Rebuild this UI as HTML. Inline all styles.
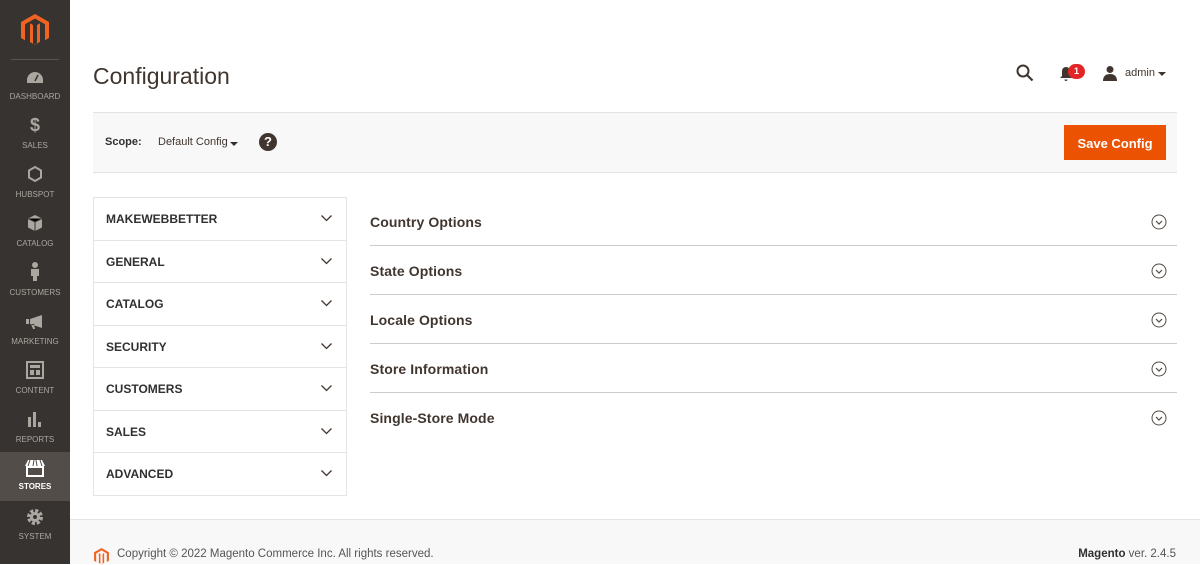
<!DOCTYPE html>
<html><head><meta charset="utf-8"><style>
*{margin:0;padding:0;box-sizing:border-box}
body{width:1200px;height:564px;overflow:hidden;font-family:"Liberation Sans",sans-serif;background:#fff;position:relative;color:#303030}
.sb{position:absolute;left:0;top:0;width:70px;height:564px;background:#373330}
.logo{position:absolute;left:21px;top:14px}
.sep{position:absolute;left:11px;top:59px;width:48px;height:1px;background:#5a5550}
.ni{position:absolute;left:0;width:70px;height:49px;text-align:center;color:#aaa6a0;font-size:8px}
.ni svg{position:absolute;left:26px;top:8px}
.ni span{position:absolute;left:0;right:0;top:30px}
.ni.act{background:#524d49;color:#fff}
.abs{position:absolute}
h1{position:absolute;left:93px;top:63px;font-size:23px;font-weight:normal;color:#41362f}
.bar{position:absolute;left:93px;top:112px;width:1084px;height:61px;background:#f8f8f8;border-top:1px solid #e3e3e3;border-bottom:1px solid #e3e3e3}
.btn{position:absolute;left:1064px;top:125px;width:102px;height:35px;background:#eb5202;color:#fff;font-size:13px;font-weight:bold;text-align:center;line-height:35px;border:1px solid #eb5202}
.lp{position:absolute;left:93px;top:197px;width:254px;height:299px;border:1px solid #e3e3e3}
.li{height:42.57px;border-bottom:1px solid #e3e3e3;font-size:12px;font-weight:bold;padding-left:12px;line-height:42px;position:relative;color:#303030}
.li:last-child{border-bottom:none}
.li svg{position:absolute;right:14px;top:17px}
.rs{position:absolute;left:370px;width:807px;height:49px;border-bottom:1px solid #cccccc;font-size:14px;font-weight:bold;color:#41362f;letter-spacing:.1px}
.rs span{position:absolute;left:0;top:17px}
.rs svg{position:absolute;right:10px;top:17px}
.ft{position:absolute;left:70px;top:519px;width:1130px;height:45px;background:#f8f8f8;border-top:1px solid #e3e3e3;font-size:11.5px;color:#555}
</style></head><body>
<div class="sb">
<svg class="logo" width="28" height="32" viewBox="0 0 28 32"><path d="M14 0L0 8v16l4 2.3V10.3L14 4.5l10 5.8v16L28 24V8z M12 11v19l2 1.2 2-1.2V11l3-1.7v18.4L14 31 9 28V9.3z" fill="#f26322" fill-rule="evenodd"/></svg>
<div class="sep"></div>
<div class="ni" style="top:62px"><svg width="18" height="16" viewBox="0 0 18 16"><path d="M9 2a8 8 0 0 0-8 8v3h16v-3a8 8 0 0 0-8-8z" fill="#aaa6a0"/><path d="M9 11L12 5" stroke="#373330" stroke-width="1.5"/></svg><span>DASHBOARD</span></div>
<div class="ni" style="top:111px"><svg width="18" height="20" viewBox="0 0 18 20" style="top:4px"><text x="9" y="16" font-size="18" font-weight="bold" text-anchor="middle" fill="#aaa6a0" font-family="Liberation Sans">$</text></svg><span>SALES</span></div>
<div class="ni" style="top:160px"><svg width="18" height="18" viewBox="0 0 18 18" style="top:5px"><path d="M9 2l6 3.5v7L9 16l-6-3.5v-7z" fill="none" stroke="#aaa6a0" stroke-width="2"/></svg><span>HUBSPOT</span></div>
<div class="ni" style="top:209px"><svg width="18" height="18" viewBox="0 0 18 18" style="top:5px"><path d="M9 1l7 3.5v9L9 17l-7-3.5v-9z" fill="#aaa6a0"/><path d="M2 4.5l7 3.5 7-3.5M9 8v9" stroke="#373330"/></svg><span>CATALOG</span></div>
<div class="ni" style="top:258px"><svg width="18" height="20" viewBox="0 0 18 20" style="top:3px"><circle cx="9" cy="4" r="3" fill="#aaa6a0"/><path d="M5 8h8v7h-2v5H7v-5H5z" fill="#aaa6a0"/></svg><span>CUSTOMERS</span></div>
<div class="ni" style="top:307px"><svg width="20" height="16" viewBox="0 0 20 16" style="left:25px;top:7px"><path d="M1 5h3v5H1zM5 5l12-4v13L5 10z M6 10l2 5h2l-1-5z" fill="#aaa6a0"/></svg><span>MARKETING</span></div>
<div class="ni" style="top:356px"><svg width="18" height="18" viewBox="0 0 18 18" style="top:5px"><rect x="1" y="1" width="16" height="16" fill="none" stroke="#aaa6a0" stroke-width="2"/><rect x="4" y="4" width="10" height="3" fill="#aaa6a0"/><rect x="4" y="9" width="4" height="5" fill="#aaa6a0"/><rect x="10" y="9" width="4" height="5" fill="#aaa6a0"/></svg><span>CONTENT</span></div>
<div class="ni" style="top:405px"><svg width="18" height="18" viewBox="0 0 18 18" style="top:5px"><rect x="2" y="7" width="3" height="10" fill="#aaa6a0"/><rect x="7" y="2" width="3" height="15" fill="#aaa6a0"/><rect x="12" y="12" width="3" height="5" fill="#aaa6a0"/></svg><span>REPORTS</span></div>
<div class="ni act" style="top:452px"><svg width="20" height="18" viewBox="0 0 20 18" style="left:25px;top:7px"><path d="M3 1h14l3 6H0z" fill="#fff"/><path d="M2 8h16v9H2z" fill="none" stroke="#fff" stroke-width="2"/><path d="M5 1l-2 6M9 1l-1 6M11 1l1 6M15 1l2 6" stroke="#524d49"/></svg><span style="font-weight:bold">STORES</span></div>
<div class="ni" style="top:502px"><svg width="18" height="18" viewBox="0 0 18 18" style="top:6px"><circle cx="9" cy="9" r="6" fill="none" stroke="#aaa6a0" stroke-width="4" stroke-dasharray="3 1.7"/><circle cx="9" cy="9" r="5" fill="#aaa6a0"/><circle cx="9" cy="9" r="2" fill="#373330"/></svg><span>SYSTEM</span></div>
</div>
<h1>Configuration</h1>
<svg class="abs" style="left:1016px;top:64px" width="18" height="18" viewBox="0 0 18 18"><circle cx="7" cy="7" r="5.5" fill="none" stroke="#41362f" stroke-width="2"/><path d="M11 11l5.5 5.5" stroke="#41362f" stroke-width="2.2"/></svg>
<svg class="abs" style="left:1059px;top:66px" width="16" height="16" viewBox="0 0 16 16"><path d="M7 1a4 4 0 0 0-4 4v5l-2 2h12l-2-2V5a4 4 0 0 0-4-4zM5.5 13.5a1.5 1.5 0 0 0 3 0z" fill="#41362f"/></svg>
<div class="abs" style="left:1068px;top:64px;width:17px;height:15px;border-radius:8px;background:#e22626;color:#fff;font-size:9px;font-weight:bold;text-align:center;line-height:15px">1</div>
<svg class="abs" style="left:1102px;top:65px" width="16" height="16" viewBox="0 0 16 16"><circle cx="8" cy="4.5" r="3.5" fill="#41362f"/><path d="M1 16c0-5 3-7 7-7s7 2 7 7z" fill="#41362f"/></svg>
<div class="abs" style="left:1125px;top:67px;font-size:11px;color:#41362f">admin</div>
<div class="abs" style="left:1158px;top:72px;border:4px solid transparent;border-top:4px solid #41362f;border-bottom:none;width:0;height:0"></div>
<div class="bar"></div>
<div class="abs" style="left:105px;top:136px;font-size:11px;font-weight:bold">Scope:</div>
<div class="abs" style="left:158px;top:136px;font-size:11px;color:#41362f">Default Config</div>
<div class="abs" style="left:230px;top:142px;border:4px solid transparent;border-top:4px solid #303030;border-bottom:none;width:0;height:0"></div>
<div class="abs" style="left:259px;top:133px;width:18px;height:18px;border-radius:50%;background:#41362f;color:#fff;font-size:13px;font-weight:bold;text-align:center;line-height:18px">?</div>
<div class="btn">Save Config</div>
<div class="lp">
<div class="li">MAKEWEBBETTER<svg width="11" height="7" viewBox="0 0 11 7"><path d="M.5.5l5 5 5-5" fill="none" stroke="#41362f" stroke-width="1.3"/></svg></div>
<div class="li">GENERAL<svg width="11" height="7" viewBox="0 0 11 7"><path d="M.5.5l5 5 5-5" fill="none" stroke="#41362f" stroke-width="1.3"/></svg></div>
<div class="li">CATALOG<svg width="11" height="7" viewBox="0 0 11 7"><path d="M.5.5l5 5 5-5" fill="none" stroke="#41362f" stroke-width="1.3"/></svg></div>
<div class="li">SECURITY<svg width="11" height="7" viewBox="0 0 11 7"><path d="M.5.5l5 5 5-5" fill="none" stroke="#41362f" stroke-width="1.3"/></svg></div>
<div class="li">CUSTOMERS<svg width="11" height="7" viewBox="0 0 11 7"><path d="M.5.5l5 5 5-5" fill="none" stroke="#41362f" stroke-width="1.3"/></svg></div>
<div class="li">SALES<svg width="11" height="7" viewBox="0 0 11 7"><path d="M.5.5l5 5 5-5" fill="none" stroke="#41362f" stroke-width="1.3"/></svg></div>
<div class="li">ADVANCED<svg width="11" height="7" viewBox="0 0 11 7"><path d="M.5.5l5 5 5-5" fill="none" stroke="#41362f" stroke-width="1.3"/></svg></div>
</div>
<div class="rs" style="top:197px"><span>Country Options</span><svg width="16" height="16" viewBox="0 0 16 16"><circle cx="8" cy="8" r="7" fill="none" stroke="#514943" stroke-width="1"/><path d="M5 7l3 3 3-3" fill="none" stroke="#514943" stroke-width="1.2"/></svg></div>
<div class="rs" style="top:246px"><span>State Options</span><svg width="16" height="16" viewBox="0 0 16 16"><circle cx="8" cy="8" r="7" fill="none" stroke="#514943" stroke-width="1"/><path d="M5 7l3 3 3-3" fill="none" stroke="#514943" stroke-width="1.2"/></svg></div>
<div class="rs" style="top:295px"><span>Locale Options</span><svg width="16" height="16" viewBox="0 0 16 16"><circle cx="8" cy="8" r="7" fill="none" stroke="#514943" stroke-width="1"/><path d="M5 7l3 3 3-3" fill="none" stroke="#514943" stroke-width="1.2"/></svg></div>
<div class="rs" style="top:344px"><span>Store Information</span><svg width="16" height="16" viewBox="0 0 16 16"><circle cx="8" cy="8" r="7" fill="none" stroke="#514943" stroke-width="1"/><path d="M5 7l3 3 3-3" fill="none" stroke="#514943" stroke-width="1.2"/></svg></div>
<div class="rs" style="top:393px;border-bottom:none"><span>Single-Store Mode</span><svg width="16" height="16" viewBox="0 0 16 16"><circle cx="8" cy="8" r="7" fill="none" stroke="#514943" stroke-width="1"/><path d="M5 7l3 3 3-3" fill="none" stroke="#514943" stroke-width="1.2"/></svg></div>
<div class="ft">
<svg class="abs" style="left:24px;top:28px" width="15" height="17" viewBox="0 0 28 32"><path d="M14 0L0 8v16l4 2.3V10.3L14 4.5l10 5.8v16L28 24V8z M12 11v19l2 1.2 2-1.2V11l3-1.7v18.4L14 31 9 28V9.3z" fill="#f26322" fill-rule="evenodd"/></svg>
<div class="abs" style="left:47px;top:28px">Copyright © 2022 Magento Commerce Inc. All rights reserved.</div>
<div class="abs" style="right:24px;top:28px"><b style="color:#303030">Magento</b> ver. 2.4.5</div>
</div>
</body></html>
